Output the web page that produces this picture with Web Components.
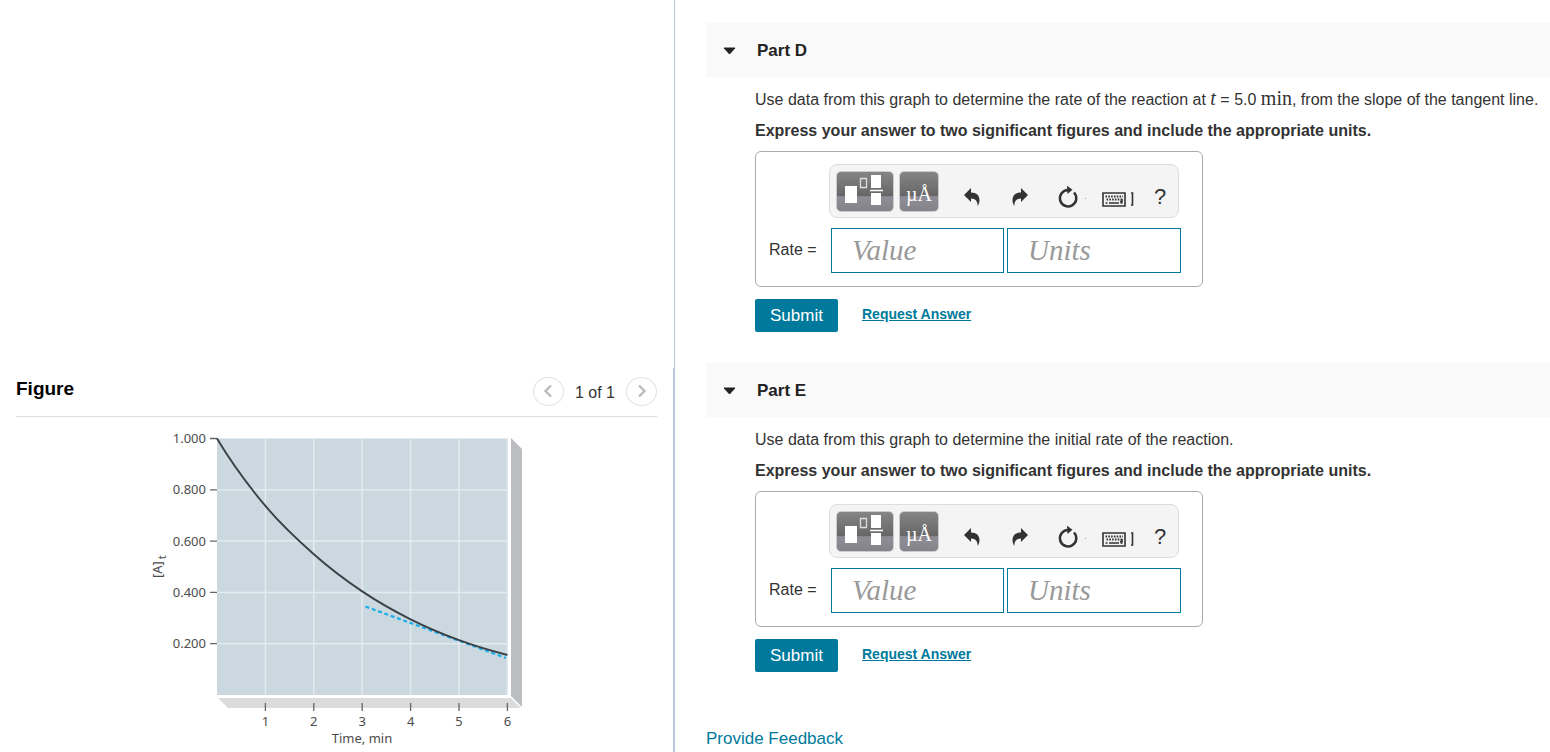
<!DOCTYPE html>
<html lang="en">
<head>
<meta charset="utf-8">
<title>Rate of reaction</title>
<style>
  body {
    margin: 0;
    background: #fff;
    color: #333;
    font: 16px/20px "Liberation Sans", Arial, sans-serif;
  }
</style>
</head>
<body>
<problem-page>
  <figure-panel slot="figure" heading="Figure" count="1 of 1">
    <rate-chart></rate-chart>
  </figure-panel>
  <answer-part heading="Part D">
    <span slot="question">Use data from this graph to determine the rate of the reaction at <math-text italic>t</math-text> = 5.0 <math-text>min</math-text>, from the slope of the tangent line.</span>
    <span slot="hint">Express your answer to two significant figures and include the appropriate units.</span>
  </answer-part>
  <answer-part heading="Part E">
    <span slot="question">Use data from this graph to determine the initial rate of the reaction.</span>
    <span slot="hint">Express your answer to two significant figures and include the appropriate units.</span>
  </answer-part>
</problem-page>

<script>
// small helper: every element here clones its markup into an open shadow root
function attach(host, html) {
  const template = document.createElement("template");
  template.innerHTML = html;
  host.attachShadow({ mode: "open" });
  host.shadowRoot.appendChild(template.content.cloneNode(true));
}

// page frame: figure on the left, parts on the right
class ProblemPage extends HTMLElement {
  constructor() {
    super();
    attach(this, `
<style>
:host {
  display: grid;
  grid-template-columns: 27fr 35fr;
  min-height: 100vh;
}
.left {
  display: grid;
  grid-template-rows: 23fr 24fr;
}
.intro { border-right: 1px solid #b8c9db; }
main { padding: 23px 0 0 31px; }
footer a {
  color: #007a9c;
  font-size: 17px;
  text-decoration: none;
}
footer { padding-top: 26px; }
</style>
<div class="left">
  <div class="intro"></div>
  <slot name="figure"></slot>
</div>
<main>
  <slot></slot>
  <footer><a href="#feedback">Provide Feedback</a></footer>
</main>
`);
  }
}

class FigurePanel extends HTMLElement {
  constructor() {
    super();
    attach(this, `
<style>
:host {
  display: block;
  padding: 0 16px;
  border-right: 2px solid #b8c9db;
}
header {
  display: flex;
  align-items: center;
  justify-content: space-between;
  box-sizing: border-box;
  height: 49px;
  padding-bottom: 2px;
  border-bottom: 1px solid #ddd;
}
h2 {
  margin: 0;
  padding-bottom: 4px;
  color: #000;
  font-size: 19px;
  line-height: 24px;
}
nav {
  display: flex;
  align-items: center;
  gap: 11px;
}
button {
  display: grid;
  place-items: center;
  width: 31px;
  height: 29px;
  padding: 0;
  border: 1px solid #e2e2e2;
  border-radius: 50%;
  background: #fff;
}
svg {
  fill: none;
  stroke: #bbb;
  stroke-width: 2.4;
}
nav span { padding-top: 4px; }
</style>
<header>
  <h2></h2>
  <nav>
    <button type="button" aria-label="Previous figure">
      <svg width="10" height="14" viewBox="0 0 10 14"><path d="M8 1.5 2.5 7 8 12.5"/></svg>
    </button>
    <span></span>
    <button type="button" aria-label="Next figure">
      <svg width="10" height="14" viewBox="0 0 10 14"><path d="M2 1.5 7.5 7 2 12.5"/></svg>
    </button>
  </nav>
</header>
<slot></slot>
`);
    this.shadowRoot.querySelector("h2").textContent = this.getAttribute("heading");
    this.shadowRoot.querySelector("nav span").textContent = this.getAttribute("count");
  }
}

// [A]t against time, with the tangent at t = 5
class RateChart extends HTMLElement {
  constructor() {
    super();
    const left = 81, top = 21.5, stepX = 48.4, stepY = 51.3;
    const right = left + 6 * stepX, bottom = top + 5 * stepY;
    const px = (t) => left + t * stepX;
    const py = (a) => bottom - a * 5 * stepY;

    // first and last values only steer the slope at the ends
    const values = [1.37, 1, 0.737, 0.549, 0.404, 0.295, 0.214, 0.156, 0.115];
    let curve = `M${px(0)} ${py(1)}`;
    for (let i = 1; i < 7; i++) {
      const t = i - 1;
      const c1 = values[i] + (values[i + 1] - values[i - 1]) / 6;
      const c2 = values[i + 1] - (values[i + 2] - values[i]) / 6;
      curve += `C${px(t + 1 / 3)} ${py(c1)} ${px(t + 2 / 3)} ${py(c2)} ${px(t + 1)} ${py(values[i + 1])}`;
    }

    let grid = "", ticks = "", labels = "";
    for (let t = 1; t <= 6; t++) {
      grid += `M${px(t)} ${top}V${bottom}`;
      ticks += `M${px(t)} 286V294`;
      labels += `<text x="${px(t)}" y="309" text-anchor="middle">${t}</text>`;
    }
    for (let n = 1; n <= 5; n++) {
      const y = py(n / 5);
      if (n < 5) grid += `M${left} ${y}H${right}`;
      ticks += `M74 ${y}H${left}`;
      labels += `<text x="70" y="${y + 4.5}" text-anchor="end">${(n / 5).toFixed(3)}</text>`;
    }

    attach(this, `
<style>
:host {
  display: flex;
  justify-content: center;
}
text {
  font: 13px "Noto Sans", "Open Sans", sans-serif;
  fill: #4c4c4c;
}
.sub { font-size: 11px; }
.grid { stroke: #e4ebef; stroke-width: 1.5; }
.ticks { stroke: #666; stroke-width: 1.3; }
.curve { fill: none; stroke: #3a4046; stroke-width: 1.9; }
.tangent { stroke: #19b0ea; stroke-width: 2.2; stroke-dasharray: 4 2.7; }
</style>
<svg width="401" height="335" viewBox="0 0 401 335" role="img" aria-label="Concentration of A against time">
  <path fill="#bbbdc0" d="M375 21 386 32V290L375 279Z"/>
  <path fill="#dadbdd" d="M82 281H375L385 291H92Z"/>
  <rect x="${left}" y="${top}" width="${right - left}" height="${bottom - top}" fill="#cbd8e0"/>
  <path class="grid" d="${grid}"/>
  <path class="ticks" d="${ticks}"/>
  <path class="tangent" d="M229.5 189.5 370 241"/>
  <path class="curve" d="${curve}"/>
  ${labels}
  <text x="226" y="326" text-anchor="middle">Time, min</text>
  <text transform="translate(26 161) rotate(-90)">[A]<tspan class="sub" dx="2" dy="4">t</tspan></text>
</svg>
`);
  }
}

class MathText extends HTMLElement {
  constructor() {
    super();
    // no whitespace round the slot, it would show up in the sentence
    attach(this, `<style>
:host {
  display: inline;
  font-family: "Liberation Serif", "Times New Roman", serif;
  font-size: 20px;
  line-height: 1px;
}
:host([italic]) { font-style: italic; }
</style><slot></slot>`);
  }
}

class AnswerToolbar extends HTMLElement {
  constructor() {
    super();
    attach(this, `
<style>
:host {
  display: flex;
  box-sizing: border-box;
  height: 54px;
  padding: 6px 0 6px 6px;
  border: 1px solid #ddd;
  border-radius: 8px;
  background: #f4f4f4;
}
button {
  display: grid;
  place-items: center;
  width: 48px;
  padding: 0;
  border: 0;
  background: none;
  color: #333;
  font: 22px/24px "Liberation Sans", Arial, sans-serif;
}
.dark {
  box-sizing: border-box;
  height: 41px;
  margin-right: 5px;
  border: 1px solid #ccc;
  border-radius: 5px;
  background: linear-gradient(#858587, #666 62%, #8f8d97 63%, #858389);
  color: #fff;
  font: 20px/24px "Liberation Serif", "Times New Roman", serif;
}
.templates { width: 58px; }
.symbols {
  width: 40px;
  padding-top: 4px;
}
.plain {
  display: flex;
  height: 28px;
  margin: 12px 0 0 4px;
}
.keyboard { width: 52px; }
.help { width: 32px; }
</style>
<button type="button" class="dark templates" aria-label="Templates">
  <svg width="56" height="39" viewBox="0 0 56 39">
    <path fill="#fff" d="M8 14h12v17H8zM34 3h10v13H34zM34 21h10v12H34zM33 17.7h13v1.5H33z"/>
    <path fill="none" stroke="#ddd" stroke-width="1.3" d="M23.5 6.500h6v9h-6z"/>
  </svg>
</button>
<button type="button" class="dark symbols">µÅ</button>
<div class="plain">
  <button type="button" aria-label="Undo">
    <svg width="18" height="20" viewBox="0 0 18 20"><path fill="#333" d="M1 8 8 1v4.500c5.500 0 8.500 3 8.500 7.500 0 2-.6 4-1.700 6-.2-4.500-2-7.500-6.800-7.500V15z"/></svg>
  </button>
  <button type="button" aria-label="Redo">
    <svg width="18" height="20" viewBox="0 0 18 20"><path fill="#333" d="M17 8 10 1v4.500C4.500 5.500 1.500 8.500 1.500 13c0 2 .6 4 1.700 6 .2-4.500 2-7.500 6.800-7.500V15z"/></svg>
  </button>
  <button type="button" aria-label="Reset">
    <svg width="40" height="24" viewBox="-9 0 40 24">
      <path fill="none" stroke="#333" stroke-width="2.5" d="M17 7.500A8.200 8.200 0 1 1 11 5"/>
      <path fill="#333" d="M10 .8 15.500 4.800 10.500 9z"/>
      <path fill="#999" d="M28 13h1v1h-1z"/>
    </svg>
  </button>
  <button type="button" class="keyboard" aria-label="Keyboard shortcuts">
    <svg width="50" height="22" viewBox="0 -4 50 22">
      <path fill="none" stroke="#333" stroke-width="1.600" d="M10 3h22v13H10z"/>
      <path fill="none" stroke="#333" stroke-width="1.800" stroke-dasharray="1.600 1.200" d="M12.500 6.500H30M13.500 9.500H30"/>
      <path fill="none" stroke="#333" stroke-width="1.600" d="M12.500 13h2M16 13h10M27.500 13h2M29 9v2.500h-2"/>
      <path fill="none" stroke="#333" stroke-width="1.600" d="M38 3h1.500v12h-1.500"/>
    </svg>
  </button>
  <button type="button" class="help" aria-label="Help">?</button>
</div>
`);
  }
}

class AnswerPart extends HTMLElement {
  constructor() {
    super();
    attach(this, `
<style>
:host {
  display: block;
  padding-bottom: 31px;
}
header {
  display: flex;
  align-items: center;
  gap: 20px;
  box-sizing: border-box;
  height: 54px;
  padding: 2px 0 0 17px;
  background: #f9f9f9;
}
h3 {
  margin: 0;
  color: #222;
  font-size: 17px;
  line-height: 20px;
}
.body { padding: 13px 0 0 49px; }
p {
  margin: 0 0 11px;
  line-height: 20px;
}
.hint {
  margin-bottom: 10px;
  font-weight: bold;
}
.answer {
  box-sizing: border-box;
  width: 448px;
  padding: 12px 21px 13px 13px;
  border: 1px solid #aaa;
  border-radius: 6px;
}
answer-toolbar { margin: 0 2px 10px 60px; }
.fields {
  display: grid;
  grid-template-columns: 59px 173px 1fr;
  column-gap: 3px;
  align-items: center;
}
label { padding-bottom: 2px; }
input {
  box-sizing: border-box;
  width: 100%;
  height: 45px;
  padding: 0 20px;
  border: 1px solid #007a9c;
  border-radius: 0;
  background: #fff;
  font: italic 29px "Liberation Serif", "Times New Roman", serif;
}
input::placeholder { color: #999; opacity: 1; }
.actions {
  display: flex;
  align-items: center;
  gap: 24px;
  margin-top: 12px;
}
button {
  width: 83px;
  height: 33px;
  padding: 0;
  border: 0;
  border-radius: 2px;
  background: #007a9c;
  color: #fff;
  font: 17px/20px "Liberation Sans", Arial, sans-serif;
}
a {
  padding-bottom: 3px;
  color: #007a9c;
  font-size: 14px;
  font-weight: bold;
}
</style>
<header>
  <svg width="14" height="8" viewBox="0 0 14 8"><path fill="#222" d="M1 1H12L6.500 7z" stroke="#222" stroke-linejoin="round"/></svg>
  <h3></h3>
</header>
<div class="body">
  <p><slot name="question"></slot></p>
  <p class="hint"><slot name="hint"></slot></p>
  <div class="answer">
    <answer-toolbar></answer-toolbar>
    <div class="fields">
      <label for="value">Rate =</label>
      <input id="value" type="text" placeholder="Value">
      <input type="text" placeholder="Units" aria-label="Units">
    </div>
  </div>
  <div class="actions">
    <button type="button">Submit</button>
    <a href="#answer">Request Answer</a>
  </div>
</div>
`);
    this.shadowRoot.querySelector("h3").textContent = this.getAttribute("heading");
  }
}

customElements.define("math-text", MathText);
customElements.define("rate-chart", RateChart);
customElements.define("answer-toolbar", AnswerToolbar);
customElements.define("answer-part", AnswerPart);
customElements.define("figure-panel", FigurePanel);
customElements.define("problem-page", ProblemPage);
</script>
</body>
</html>
